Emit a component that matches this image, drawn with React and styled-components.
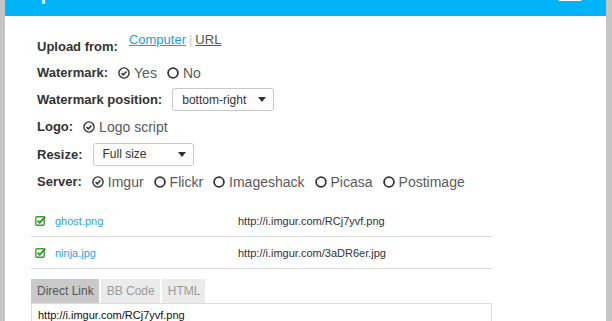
import React from "react";
import styled, { createGlobalStyle } from "styled-components";

const GlobalStyle = createGlobalStyle`
  html, body { margin: 0; padding: 0; }
  body {
    background: #c5c5c5;
    font-family: "Liberation Sans", Arial, Helvetica, sans-serif;
  }
`;

const Page = styled.div`
  height: 321px;
  overflow: hidden;
  padding: 0 6px 0 5px;
`;

const Panel = styled.div`
  background: #fff;
  height: 321px;
`;

const Header = styled.div`
  height: 16px;
  background: #00b4f7;
  overflow: hidden;
  display: flex;
  justify-content: space-between;
  align-items: flex-end;
  padding: 0 24px 0 23px;
`;

const Title = styled.div`
  color: #fff;
  font-size: 18px;
  font-weight: bold;
  line-height: 18px;
  margin-bottom: 13px;
`;

const CloseBtn = styled.div`
  width: 24px;
  height: 10px;
  background: #fff;
  border-radius: 2px;
  margin-bottom: 15px;
`;

const Body = styled.div`
  padding: 17px 0 0 26px;
`;

const Form = styled.div`
  padding-left: 6px;
`;

const Row = styled.div`
  display: flex;
  align-items: ${(p) => (p.$top ? "flex-start" : "center")};
  height: ${(p) => p.$h || 27}px;
`;

const Label = styled.span`
  font-size: 13px;
  font-weight: bold;
  color: #333;
  line-height: 27px;
  margin-right: 10px;
  white-space: nowrap;
`;

const Links = styled.span`
  font-size: 13px;
  line-height: 13px;
  margin-left: 1px;
  white-space: nowrap;
`;

const Link = styled.a`
  color: ${(p) => (p.$muted ? "#555" : "#1e9be9")};
  text-decoration: underline;
  cursor: pointer;
`;

const Sep = styled.span`
  color: #ccc;
  margin: 0 3px;
`;

const Option = styled.span`
  display: inline-flex;
  align-items: center;
  gap: 4px;
  margin-right: 10px;
  font-size: 14px;
  color: #5a5a5a;
  white-space: nowrap;
`;

const Select = styled.div`
  box-sizing: border-box;
  width: ${(p) => p.$w}px;
  height: 23px;
  border: 1px solid #c8c8c8;
  border-radius: 3px;
  display: flex;
  align-items: center;
  justify-content: space-between;
  padding: 0 7px 0 9px;
  font-size: 12px;
  color: #333;
  background: #fff;
`;

const FileList = styled.div`
  width: 461px;
  margin-top: 10px;
`;

const FileRow = styled.div`
  display: flex;
  align-items: center;
  height: 31px;
  border-bottom: 1px solid #dcdcdc;
  padding-left: 4px;
  font-size: 11px;
`;

const NameCell = styled.div`
  width: 203px;
  display: flex;
  align-items: center;
  gap: 9px;
  color: #2fa0e6;
`;

const UrlCell = styled.div`
  color: #333;
`;

const Tabs = styled.div`
  display: flex;
  gap: 2px;
  margin-top: 10px;
`;

const Tab = styled.div`
  height: 24px;
  line-height: 25px;
  padding: 0 5px 0 6px;
  font-size: 12px;
  background: ${(p) => (p.$active ? "#c9c9c9" : "#ebebeb")};
  color: ${(p) => (p.$active ? "#555" : "#9a9a9a")};
`;

const Output = styled.div`
  box-sizing: border-box;
  width: 461px;
  height: 40px;
  border: 1px solid #dcdcdc;
  padding: 3px 6px;
  font-size: 11px;
  line-height: 16px;
  color: #111;
`;

const CheckCircle = () => (
  <svg width="12" height="12" viewBox="0 0 12 12">
    <circle cx="6" cy="6" r="5.1" fill="none" stroke="#333" strokeWidth="1.4" />
    <path d="M3.6 6.1 L5.3 7.8 L8.5 4.4" fill="none" stroke="#333" strokeWidth="1.5" />
  </svg>
);

const RadioEmpty = () => (
  <svg width="12" height="12" viewBox="0 0 12 12">
    <circle cx="6" cy="6" r="4.9" fill="none" stroke="#333" strokeWidth="1.8" />
  </svg>
);

const Caret = () => (
  <svg width="8" height="5" viewBox="0 0 8 5">
    <path d="M0 0 H8 L4 5 Z" fill="#333" />
  </svg>
);

const GreenCheck = () => (
  <svg width="11" height="11" viewBox="0 0 11 11">
    <rect x="0.8" y="1.8" width="8.4" height="8.4" rx="1.2" fill="none" stroke="#3d9a35" strokeWidth="1.4" />
    <path d="M2.6 5.6 L4.7 7.7 L10.3 1.6" fill="none" stroke="#3d9a35" strokeWidth="2" />
  </svg>
);

const servers = ["Imgur", "Flickr", "Imageshack", "Picasa", "Postimage"];
const files = [
  { name: "ghost.png", url: "http://i.imgur.com/RCj7yvf.png" },
  { name: "ninja.jpg", url: "http://i.imgur.com/3aDR6er.jpg" },
];

export default function App() {
  return (
    <>
      <GlobalStyle />
      <Page>
        <Panel>
          <Header>
            <Title>Upload Photos</Title>
            <CloseBtn />
          </Header>
          <Body>
            <Form>
              <Row $h={26} $top>
                <Label>Upload from:</Label>
                <Links>
                  <Link>Computer</Link>
                  <Sep>|</Sep>
                  <Link $muted>URL</Link>
                </Links>
              </Row>
              <Row>
                <Label>Watermark:</Label>
                <Option>
                  <CheckCircle />
                  Yes
                </Option>
                <Option>
                  <RadioEmpty />
                  No
                </Option>
              </Row>
              <Row>
                <Label>Watermark position:</Label>
                <Select $w={102}>
                  bottom-right
                  <Caret />
                </Select>
              </Row>
              <Row>
                <Label>Logo:</Label>
                <Option>
                  <CheckCircle />
                  Logo script
                </Option>
              </Row>
              <Row $h={28}>
                <Label>Resize:</Label>
                <Select $w={101}>
                  Full size
                  <Caret />
                </Select>
              </Row>
              <Row>
                <Label>Server:</Label>
                {servers.map((s, i) => (
                  <Option key={s}>
                    {i === 0 ? <CheckCircle /> : <RadioEmpty />}
                    {s}
                  </Option>
                ))}
              </Row>
            </Form>
            <FileList>
              {files.map((f) => (
                <FileRow key={f.name}>
                  <NameCell>
                    <GreenCheck />
                    {f.name}
                  </NameCell>
                  <UrlCell>{f.url}</UrlCell>
                </FileRow>
              ))}
            </FileList>
            <Tabs>
              <Tab $active>Direct Link</Tab>
              <Tab>BB Code</Tab>
              <Tab>HTML</Tab>
            </Tabs>
            <Output>http://i.imgur.com/RCj7yvf.png</Output>
          </Body>
        </Panel>
      </Page>
    </>
  );
}
